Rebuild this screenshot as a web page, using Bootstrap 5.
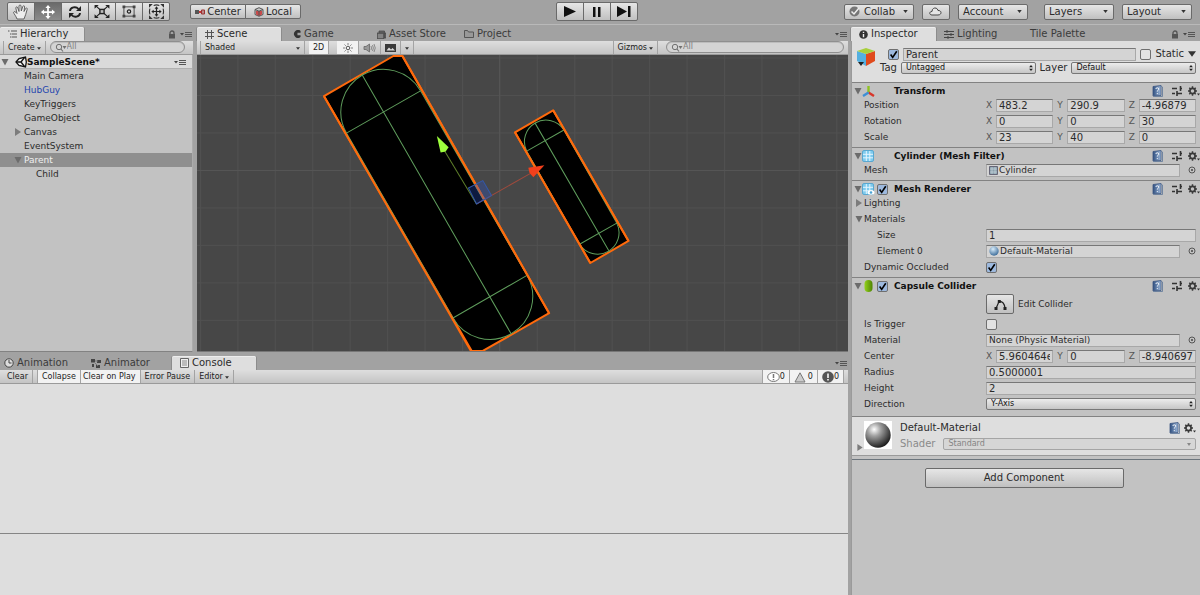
<!DOCTYPE html>
<html lang="en">
<head>
<meta charset="utf-8">
<meta name="viewport" content="width=device-width, initial-scale=1">
<title>SampleScene - Editor</title>
<link href="https://cdn.jsdelivr.net/npm/bootstrap@5.3.0/dist/css/bootstrap.min.css" rel="stylesheet">
<style>
:root { --ui: "DejaVu Sans", sans-serif; --pane: #c2c2c2; --edge: #828282; --ink: #2b2b2b; --fs: 9px; --fs-s: 8px; --fs-l: 10px; }
body { font-family: var(--ui); font-size: var(--fs); line-height: 14px; color: var(--ink); background: #a2a2a2; min-height: 100vh; }
svg { display: block; flex: none; }
button, input, select { font-family: inherit; color: inherit; }
.editor { height: 100vh; min-height: 500px; }

/* top toolbar */
.topbar { height: 25px; padding: 0 8px 1px 7px; border-bottom: 1px solid #b9b9b9; display: grid; grid-template-columns: 1fr auto 1fr; align-items: center; }
.btn-u { --bs-btn-padding-x: 0; --bs-btn-padding-y: 0; --bs-btn-font-size: 10px; --bs-btn-line-height: 12px; --bs-btn-border-color: #6a6a6a; --bs-btn-border-radius: 2px; --bs-btn-color: #2b2b2b; --bs-btn-hover-color: #2b2b2b; --bs-btn-hover-border-color: #555; background: linear-gradient(#e6e6e6, #c0c0c0); display: flex; align-items: center; justify-content: center; gap: 2px; white-space: nowrap; }
.btn-u:hover { background: linear-gradient(#f0f0f0, #cacaca); }
.btn-u.pressed { background: linear-gradient(#6b6b6b, #8b8b8b); }
.tool { width: 28px; height: 19px; }
.pivots { margin-left: 20px; }
.pivot { width: 56px; height: 15px; }
.playback { margin-right: 5px; }
.menu-b { height: 16px; justify-content: space-between; padding: 0 5px 0 4px; }
.w-70 { width: 70px; }
.w-28 { width: 28px; }

/* dock layout */
.dock { display: grid; grid-template-columns: minmax(0, 1fr) 349px; column-gap: 3px; padding-top: 2px; }
.left-col { display: grid; grid-template-rows: minmax(0, 326fr) minmax(0, 239fr); row-gap: 4px; }
.upper { display: grid; grid-template-columns: 193px minmax(0, 1fr); column-gap: 4px; }
.tabs { height: 14px; flex: none; font-size: var(--fs-l); color: #3b3b3b; }
.tab { display: flex; align-items: center; gap: 3px; height: 14px; padding: 0 8px; border: 0; background: none; font-size: inherit; line-height: 14px; color: inherit; white-space: nowrap; }
.tab.active { background: #dedede; border-radius: 2px 2px 0 0; color: var(--ink); box-shadow: inset 0 1px #ededed, -1px 0 #8c8c8c, 1px 0 #8c8c8c; }
.bar { height: 14px; flex: none; background: linear-gradient(#dedede, #c4c4c4); border-bottom: 1px solid #9a9a9a; font-size: var(--fs-s); padding-left: 3px; }
.bar-b { display: flex; align-items: center; gap: 2px; border: 0; border-right: 1px solid #a3a3a3; background: none; padding: 1px 4px 0; font-size: inherit; line-height: 12px; white-space: nowrap; color: #1c1c1c; }
.bar-b.on { background: #f2f2f2; }
.div-l { border-left: 1px solid #a3a3a3; }
.search { display: flex; align-items: center; height: 12px; background: #d4d4d4; border: 1px solid #8f8f8f; border-radius: 6px; padding: 0 4px; box-shadow: inset 0 1px #bdbdbd; }
.search input { border: 0; outline: 0; background: none; padding: 0; height: 10px; min-width: 0; width: 100%; font-size: var(--fs-s); line-height: 10px; }
.search input::placeholder { color: #808080; opacity: 1; }

/* hierarchy */
.tree { background: var(--pane); list-style: none; margin: 0; padding: 0; min-height: 0; flex: 1; border-right: 1px solid #ababab; border-bottom: 1px solid var(--edge); }
.tree li { height: 14px; padding-left: 14px; display: flex; align-items: center; white-space: nowrap; }
.tree li.root { height: 14px; padding: 0 5px 0 1px; background: #dadada; border-bottom: 1px solid #b0b0b0; font-weight: 700; color: #111; }
.tree li.sel { background: #8f8f8f; color: #f0f0f0; }
.tree li.deep { padding-left: 26px; }
.tree a { color: #2345ae; text-decoration: none; }
.fold { width: 10px; flex: none; }
.viewport { background: #474747; flex: 1; min-height: 0; overflow: hidden; border-bottom: 1px solid #777; }
.viewport svg { width: 100%; height: 100%; }

/* console */
.log { background: #dedede; flex: 148; border-bottom: 1px solid #858585; }
.detail { background: #dedede; flex: 61; }

/* inspector */
.insp { background: var(--pane); flex: 1; min-height: 0; border-left: 1px solid #9a9a9a; }
.head { background: #dedede; height: 41px; padding: 6px 4px 0 4px; }
.active-row { padding-left: 8px; }
.comp { border-top: 1px solid #828282; padding: 0 4px 2px 12px; }
.title { height: 14px; padding-top: 2px; margin-left: -10px; display: flex; align-items: center; font-weight: 700; color: #111; }
.title .slot { width: 32px; display: flex; align-items: center; gap: 2px; flex: none; }
.title h2 { font-size: inherit; line-height: 14px; font-weight: 700; margin: 0; flex: 1; }
.acts { display: flex; align-items: center; gap: 6px; margin-right: -4px; }
.acts svg:first-child { margin-right: 3px; }
.rowf { height: 16px; display: flex; align-items: center; }
.rowf > .lab { width: 122px; flex: none; }
.rowf > .lab.in1 { padding-left: 13px; }
.rowf .tri { margin-left: -10px; width: 10px; }
.fld { height: 13px; min-width: 0; width: 100%; flex: 1; padding: 0 2px; font-size: var(--fs-l); line-height: 11px; background: #d4d4d4; border: 1px solid #a8a8a8; border-top-color: #777; border-radius: 0; }
.fld:focus, .pop:focus { outline: 1px solid #3d6fb8; box-shadow: none; }
.obj { display: flex; align-items: center; gap: 1px; text-align: left; font-size: var(--fs); }
.vec { display: grid; grid-template-columns: repeat(3, 1fr); column-gap: 4px; flex: 1; min-width: 0; }
.vec label { display: flex; align-items: center; min-width: 0; color: #555; }
.vec label span { width: 10px; flex: none; }
.vec .fld { color: var(--ink); }
.pop { height: 12px; padding: 0 10px 0 4px; font-size: var(--fs-s); line-height: 10px; border: 1px solid #777; border-radius: 2px; color: #111; background: url("data:image/svg+xml,%3Csvg xmlns='http://www.w3.org/2000/svg' viewBox='0 0 5 8'%3E%3Cpath d='M0 3 2.500 0 5 3zM0 5 2.500 8 5 5z' fill='%23222'/%3E%3C/svg%3E") right 2px center / 4px 6px no-repeat, linear-gradient(#ececec, #c6c6c6); }
.pop.off { color: #848484; border-color: #a5a5a5; background: url("data:image/svg+xml,%3Csvg xmlns='http://www.w3.org/2000/svg' viewBox='0 0 4 3'%3E%3Cpath d='M0 0H4L2 3z' fill='%23888'/%3E%3C/svg%3E") right 4px center / 4px 3px no-repeat, #d6d6d6; opacity: 1; }
.chk.form-check-input { width: 11px; height: 11px; margin: 0; float: none; border: 1px solid #6f6f6f; border-radius: 2px; background-color: #e2e2e2; flex: none; }
.chk.form-check-input:checked { background-color: #9db9de; background-image: url("data:image/svg+xml,%3Csvg xmlns='http://www.w3.org/2000/svg' viewBox='0 0 11 11'%3E%3Cpath d='M2 5.500 4.500 9 9.500 1.500' fill='none' stroke='%23000' stroke-width='2'/%3E%3C/svg%3E"); }
.mat { height: 40px; background: #dedede; border-top: 1px solid #828282; border-bottom: 1px solid #9a9a9a; padding: 4px 4px 0 4px; }
.preview { background: #fff; }
.add { width: 199px; height: 20px; }
.cap { font-size: var(--fs-l); }
</style>
</head>
<body>
<svg width="0" height="0" class="position-absolute" aria-hidden="true">
  <defs>
    <linearGradient id="bookg" x1="0" x2="1"><stop offset="0" stop-color="#2f4f80"/><stop offset="1" stop-color="#9fb9da"/></linearGradient>
    <linearGradient id="capg" x1="0" x2="1"><stop offset="0" stop-color="#93d11c"/><stop offset="1" stop-color="#4f8404"/></linearGradient>
    <radialGradient id="ball" cx=".35" cy=".28" r=".75"><stop offset="0" stop-color="#fff"/><stop offset=".35" stop-color="#a0a0a0"/><stop offset="1" stop-color="#1b1b1b"/></radialGradient>
    <radialGradient id="bball" cx=".4" cy=".3" r=".7"><stop offset="0" stop-color="#d8ecfa"/><stop offset="1" stop-color="#3f6f9c"/></radialGradient>
  </defs>
  <symbol id="down" viewBox="0 0 8 8"><path d="M.5 1h7L4 7.500z" fill="#6c6c6c"/></symbol>
  <symbol id="right" viewBox="0 0 8 8"><path d="M1 0v8l6-4z" fill="#7c7c7c"/></symbol>
  <symbol id="caret" viewBox="0 0 6 4"><path d="M0 0h6L3 4z" fill="#333"/></symbol>
  <symbol id="lock" viewBox="0 0 8 9"><path d="M2 4V3a2 2 0 0 1 4 0v1" fill="none" stroke="#555" stroke-width="1.300"/><path d="M1 4h6v4.500H1z" fill="#555"/></symbol>
  <symbol id="menu" viewBox="0 0 13 8"><path d="M0 3h4L2 5.500z" fill="#444"/><path d="M5 2.500h7M5 4.500h7M5 6.500h7" stroke="#555"/></symbol>
  <symbol id="mag" viewBox="0 0 12 9"><circle cx="4" cy="4" r="2.700" fill="none" stroke="#707070"/><path d="M6 6l2 2.500" stroke="#707070" stroke-width="1.200"/><path d="M7.500 3h4l-2 3z" fill="#707070"/></symbol>
  <symbol id="help" viewBox="0 0 11 12"><path d="M1 1.500 9 .5v10l-8 .5z" fill="url(#bookg)" stroke="#3c5680" stroke-width=".8"/><path d="M9 1l1.500 1v9.500H3L1 11" fill="none" stroke="#5d7698" stroke-width=".8"/><path d="M3.800 4c0-1.600 3-1.600 3 0 0 1.200-1.500 1-1.500 2.600M5.300 8v1.100" fill="none" stroke="#fff" stroke-width=".9"/></symbol>
  <symbol id="preset" viewBox="0 0 10 10"><path d="M0 2.500h5M8 2.500h2M0 7.500h3M5 7.500h5" stroke="#333" stroke-width="1.300"/><path d="M8.500 0v5M5 5v5" stroke="#333" stroke-width="1.600"/></symbol>
  <symbol id="gear" viewBox="0 0 12 10"><circle cx="4.500" cy="5" r="2.600" fill="none" stroke="#3a3a3a" stroke-width="1.700"/><path d="M4.500 .3v2M4.500 7.700v2M0 5h2M7 5h2M1.300 1.800l1.400 1.400M6.300 6.800l1.400 1.400M1.300 8.200l1.400-1.400M6.300 3.200l1.400-1.400" stroke="#3a3a3a" stroke-width="1.500"/><path d="M9 7.500h3L10.500 9.500z" fill="#333"/></symbol>
  <symbol id="pick" viewBox="0 0 8 8"><circle cx="4" cy="4" r="3" fill="none" stroke="#555"/><circle cx="4" cy="4" r="1" fill="#444"/></symbol>
  <symbol id="mesh" viewBox="0 0 12 12"><rect x=".5" y=".5" width="11" height="11" rx="1.500" fill="#7ecbee" stroke="#5aa7cf"/><path d="M4.300 1v10M7.800 1v10M1 4.300h10M1 7.800h10" stroke="#e4f6ff"/></symbol>
</svg>

<div class="editor d-flex flex-column">
  <header class="topbar">
    <div class="d-flex align-items-center">
      <div class="btn-group" role="group" aria-label="Transform tools">
        <button class="btn btn-u tool" aria-label="Hand"><svg width="18" height="16" viewBox="0 0 18 16"><path d="M5 15C4 12 2 10 1.500 8.500 2 7 3.500 7.500 5 9.500L3.800 4c0-1.500 1.600-1.600 2 0L7 7.500 7 2c.2-1.400 1.800-1.400 2 0l.3 5L10.800 2.500c.5-1.300 2-.8 1.800.5L12 7.500l1.600-3c.8-1 2-.3 1.600.8C14 9 13.500 12 12 15z" fill="#ededed" stroke="#555" stroke-width=".9"/></svg></button>
        <button class="btn btn-u tool pressed" aria-label="Move"><svg width="14" height="14" viewBox="0 0 16 16"><path d="M8 1v14M1 8h14" stroke="#fff" stroke-width="2"/><path d="M8 0l3 3.500H5zM8 16l3-3.500H5zM0 8l3.500-3v6zM16 8l-3.500-3v6z" fill="#fff"/></svg></button>
        <button class="btn btn-u tool" aria-label="Rotate"><svg width="14" height="14" viewBox="0 0 14 14"><path d="M2 6c.3-4 6-5 8.500-2M12 8c-.3 4-6 5-8.500 2" fill="none" stroke="#222" stroke-width="1.900"/><path d="M13 1v5H8zM1 13V8h5z" fill="#222"/></svg></button>
        <button class="btn btn-u tool" aria-label="Scale"><svg width="16" height="13" viewBox="0 0 16 14"><path d="M2 1.500l12 11M14 1.500l-12 11" stroke="#222" stroke-width="1.300"/><path d="M5 4h6v6H5z" fill="#222"/><path d="M6.500 5.500h3v3h-3z" fill="#bbb"/><path d="M0 0h4.500L0 4zM16 0h-4.500L16 4zM0 14h4.500L0 10zM16 14h-4.500L16 10z" fill="#222"/></svg></button>
        <button class="btn btn-u tool" aria-label="Rect"><svg width="14" height="13" viewBox="0 0 15 14"><path d="M2 2h11v10H2z" fill="none" stroke="#444"/><circle cx="7.500" cy="7" r="1.800" fill="none" stroke="#222" stroke-width="1.300"/><path d="M.5.5h3v3h-3zM11.500.5h3v3h-3zM.5 10.500h3v3h-3zM11.500 10.500h3v3h-3z" fill="#444"/></svg></button>
        <button class="btn btn-u tool" aria-label="Transform"><svg width="17" height="15" viewBox="0 0 18 16"><path d="M9 4v8M5 8h8" stroke="#222" stroke-width="1.300"/><path d="M9 2.500l2 2.500H7zM9 13.500l2-2.500H7zM3.500 8l2.500-2v4zM14.500 8l-2.500-2v4z" fill="#222"/><path d="M6 1.600Q9 .3 12 1.600M16 5q1 3 0 6M12 14.400q-3 1.200-6 0M2 11q-1-3 0-6" fill="none" stroke="#333" stroke-width="1.200"/><path d="M1 0h4L1 4zM17 0h-4l4 4zM1 16h4l-4-4zM17 16h-4l4-4z" fill="#333"/></svg></button>
      </div>
      <div class="btn-group pivots" role="group" aria-label="Pivot">
        <button class="btn btn-u pivot"><svg width="10" height="8" viewBox="0 0 10 8"><path d="M0 2h4v4H0z" fill="#555"/><path d="M4 4h3" stroke="#c33" stroke-width="2"/><path d="M6.500 2h3v4h-3z" fill="#b88" stroke="#933"/></svg>Center</button>
        <button class="btn btn-u pivot"><svg width="10" height="10" viewBox="0 0 10 10"><path d="M1 2.500 5 .7l4 1.800v5L5 9.300 1 7.500z" fill="#c9c9c9" stroke="#555"/><path d="M2 4h6v3.500L5 9 2 7.500z" fill="#c84a4a"/><path d="M5 4v5M1 2.500l4 1.700 4-1.700" stroke="#555" fill="none"/></svg>Local</button>
      </div>
    </div>
    <div class="btn-group playback" role="group" aria-label="Playback">
      <button class="btn btn-u tool" aria-label="Play"><svg width="14" height="13" viewBox="0 0 14 13"><path d="M1 1l12 5.500L1 12z" fill="#111"/></svg></button>
      <button class="btn btn-u tool" aria-label="Pause"><svg width="10" height="12" viewBox="0 0 10 12"><path d="M1 1h2.500v10H1zM6 1h2.500v10H6z" fill="#111"/></svg></button>
      <button class="btn btn-u tool" aria-label="Step"><svg width="14" height="13" viewBox="0 0 14 13"><path d="M0 1l10 5.500L0 12zM11 1h2.500v11H11z" fill="#111"/></svg></button>
    </div>
    <div class="d-flex justify-content-end gap-2">
      <button class="btn btn-u menu-b w-70"><svg width="11" height="11" viewBox="0 0 11 11"><circle cx="5.500" cy="5.500" r="5" fill="#777"/><path d="M2.500 5.500 5 8l5-6" fill="none" stroke="#eee" stroke-width="1.500"/></svg>Collab<svg class="ms-1" width="5" height="3"><use href="#caret"/></svg></button>
      <button class="btn btn-u menu-b w-28 justify-content-center" aria-label="Cloud"><svg width="13" height="9" viewBox="0 0 13 9"><path d="M3 8C0 8 0 4.500 3 4.500 3 0 8.500 0 9 3.500c4-.3 4 4.500 0 4.500z" fill="#e4e4e4" stroke="#444"/></svg></button>
      <button class="btn btn-u menu-b w-70">Account<svg width="5" height="3"><use href="#caret"/></svg></button>
      <button class="btn btn-u menu-b w-70 ms-2">Layers<svg width="5" height="3"><use href="#caret"/></svg></button>
      <button class="btn btn-u menu-b w-70">Layout<svg width="5" height="3"><use href="#caret"/></svg></button>
    </div>
  </header>

  <main class="dock flex-grow-1">
    <div class="left-col">
      <div class="upper">
        <section class="d-flex flex-column" aria-label="Hierarchy">
          <div class="tabs d-flex align-items-center">
            <button class="tab active px-2" style="width:84px"><svg width="9" height="8" viewBox="0 0 9 8"><path d="M0 1h1.500M3 1h6M2 4h1.500M4 4h5M2 7h1.500M4 7h5" stroke="#555"/></svg>Hierarchy</button>
            <svg class="ms-auto me-1" width="8" height="9"><use href="#lock"/></svg><svg width="13" height="8"><use href="#menu"/></svg>
          </div>
          <div class="bar d-flex">
            <button class="bar-b div-l">Create<svg class="ms-px" width="4" height="3"><use href="#caret"/></svg></button>
            <div class="search flex-grow-1 ms-1 me-2"><svg width="12" height="9"><use href="#mag"/></svg><input type="text" placeholder="All" aria-label="Search hierarchy"></div>
          </div>
          <ul class="tree">
            <li class="root"><span class="fold"><svg width="8" height="8"><use href="#down"/></svg></span><svg class="ms-1" width="12" height="12" viewBox="0 0 12 12"><path d="M1 6 4 2.500 10.500 1 11.300 6 10.500 11 4 9.500z" fill="#eee" stroke="#111" stroke-width="1.300"/><path d="M1 6h5M6 6l3.500-4.500M6 6l3.500 4.500" stroke="#111" stroke-width="1.300"/></svg>SampleScene*<svg class="ms-auto" width="13" height="8"><use href="#menu"/></svg></li>
            <li><span class="fold"></span>Main Camera</li>
            <li><span class="fold"></span><a href="#">HubGuy</a></li>
            <li><span class="fold"></span>KeyTriggers</li>
            <li><span class="fold"></span>GameObject</li>
            <li><span class="fold"><svg width="8" height="8"><use href="#right"/></svg></span>Canvas</li>
            <li><span class="fold"></span>EventSystem</li>
            <li class="sel"><span class="fold"><svg width="8" height="8"><use href="#down"/></svg></span>Parent</li>
            <li class="deep"><span class="fold"></span>Child</li>
          </ul>
        </section>

        <section class="d-flex flex-column" aria-label="Scene">
          <div class="tabs d-flex align-items-center">
            <button class="tab active" style="width:84px"><svg width="9" height="9" viewBox="0 0 9 9"><path d="M2.500 0v9M6.500 0v9M0 2.500h9M0 6.500h9" stroke="#555"/></svg>Scene</button>
            <button class="tab ms-1" style="width:84px"><svg width="8" height="8" viewBox="0 0 9 9"><path d="M8.500 1A4.500 4.500 0 1 0 8.500 8V6H5V3h3.500z" fill="#333"/></svg>Game</button>
            <button class="tab" style="width:87px"><svg width="9" height="9" viewBox="0 0 9 9"><path d="M2 3V1h5.500v2M0 3h7v6H0zM7.500 3H9v5H7.500z" fill="#666" stroke="#444" stroke-width=".7"/><path d="M1 5h5M1 7h5" stroke="#bbb" stroke-width=".7"/></svg>Asset Store</button>
            <button class="tab"><svg width="10" height="8" viewBox="0 0 10 8"><path d="M.5 7.500v-7h3l1 1.500h5v5.500z" fill="#999" stroke="#555"/></svg>Project</button>
            <svg class="ms-auto me-px" width="13" height="8"><use href="#menu"/></svg>
          </div>
          <div class="bar d-flex">
            <button class="bar-b div-l justify-content-between" style="width:105px">Shaded<svg width="4" height="3"><use href="#caret"/></svg></button>
            <button class="bar-b on ms-1">2D</button>
            <button class="bar-b on ms-2 justify-content-center" style="width:22px" aria-label="Lighting"><svg width="10" height="10" viewBox="0 0 10 10"><circle cx="5" cy="5" r="1.800" fill="none" stroke="#555"/><path d="M5 0v2M5 8v2M0 5h2M8 5h2M1.500 1.500l1.300 1.300M7.200 7.200l1.300 1.300M1.500 8.500l1.300-1.300M7.200 2.800l1.300-1.300" stroke="#666" stroke-width=".8"/></svg></button>
            <button class="bar-b" aria-label="Audio"><svg width="13" height="10" viewBox="0 0 13 10"><path d="M1 3.500h2L6.500 1v8L3 6.500H1z" fill="#999" stroke="#666" stroke-width=".8"/><path d="M8 3q1 2 0 4M9.500 2q1.700 3 0 6M11 1q2.500 4 0 8" fill="none" stroke="#777" stroke-width=".8"/></svg></button>
            <button class="bar-b" aria-label="Effects"><svg width="11" height="8" viewBox="0 0 11 8"><path d="M0 0h11v8H0z" fill="#3a3a3a"/><path d="M1.500 6.500l2.500-3 2 2 1.500-1.500 2.500 2.500z" fill="#ddd"/></svg></button>
            <button class="bar-b px-1" aria-label="Effects menu"><svg width="4" height="3"><use href="#caret"/></svg></button>
            <button class="bar-b div-l ms-auto">Gizmos<svg width="4" height="3"><use href="#caret"/></svg></button>
            <div class="search ms-2 me-1" style="width:178px"><svg width="12" height="9"><use href="#mag"/></svg><input type="text" placeholder="All" aria-label="Search scene"></div>
          </div>
          <div class="viewport">
            <svg viewBox="0 0 651 295" preserveAspectRatio="xMidYMid slice" role="img" aria-label="Scene view">
              <defs><pattern id="grid" x="4.500" y="2.500" width="37.250" height="37.300" patternUnits="userSpaceOnUse"><path d="M.5 0v37.300M0 .5h37.250" stroke="#505050"/></pattern></defs>
              <rect width="651" height="295" fill="#474747"/>
              <rect width="651" height="295" fill="url(#grid)"/>
              <path d="M302.500 0v295M0 115h651" stroke="#555"/>
              <g stroke="#ff6a0c" stroke-width="2" stroke-linejoin="round">
                <path d="M128 41 197 1h9l146 256-66 37.500h-11z"/>
                <path d="M318 77l38-22 75 130-38 22z"/>
              </g>
              <g fill="none" stroke="#5f9d5c" stroke-width="1">
                <path d="M150.300 77.700A42.400 42.400 0 0 1 224 35.700L330 219.300A42.400 42.400 0 0 1 256.300 261.700ZM150.300 77.700 224 35.700M256.300 261.700 330 219.300M165.700 19.300 314.300 277.700"/>
                <path d="M329.700 95.700A21.300 21.300 0 0 1 366.700 74.700L419.300 167.300A21.300 21.300 0 0 1 382.300 188.300ZM329.700 95.700l37-21M382.300 188.300l37-21M337.700 67.300 412 195.700"/>
              </g>
              <path d="M128 41 275 296M206 1 352 257M318 77l75 130M356 55l75 130" fill="none" stroke="#ff6a0c" stroke-width="2"/>
              <path d="M279.700 148.300 247.700 95" stroke="#5e7f2a"/>
              <path d="M279.700 148.300 333 118" stroke="#a04a3c"/>
              <path d="M279.700 148.300 271.700 132.300 286 125l8.700 15z" fill="#2850c8" fill-opacity=".32" stroke="#3458a8"/>
              <path d="M240.300 80.700 244 97 249 96 252 91.700z" fill="#9dff3c"/>
              <path d="M347.300 109.700 331.300 112.300 332.500 117.500 336.300 121.700z" fill="#f2401c"/>
            </svg>
          </div>
        </section>
      </div>

      <section class="d-flex flex-column" aria-label="Console">
        <div class="tabs d-flex align-items-center">
          <button class="tab ps-1" style="width:87px"><svg class="ms-px" width="10" height="10" viewBox="0 0 10 10"><circle cx="5" cy="5" r="4.200" fill="#ddd" stroke="#444"/><path d="M5 2v3h2.500" fill="none" stroke="#444"/></svg>Animation</button>
          <button class="tab ps-1" style="width:85px"><svg width="10" height="9" viewBox="0 0 10 9"><path d="M0 0h4v3.500H0zM6 1h4v3H6zM5 6h4v3H5zM1 5h2v3H1z" fill="#444"/><path d="M3 3l4 4M4 2h3" stroke="#777"/></svg>Animator</button>
          <button class="tab active" style="width:84px"><svg width="9" height="10" viewBox="0 0 9 10"><path d="M.5.5h8v9h-8z" fill="#eee" stroke="#666"/><path d="M2 3h5M2 5h5M2 7h5" stroke="#888"/></svg>Console</button>
          <svg class="ms-auto me-px" width="13" height="8"><use href="#menu"/></svg>
        </div>
        <div class="bar d-flex">
          <button class="bar-b ps-1">Clear</button>
          <button class="bar-b div-l on ms-1">Collapse</button>
          <button class="bar-b on" style="padding-left:2px">Clear on Play</button>
          <button class="bar-b">Error Pause</button>
          <button class="bar-b">Editor<svg class="ms-px" width="4" height="3"><use href="#caret"/></svg></button>
          <button class="bar-b div-l on ms-auto px-1 gap-0" aria-label="Messages"><svg width="13" height="11" viewBox="0 0 13 11"><ellipse cx="6.500" cy="5" rx="5.800" ry="4.500" fill="#fff" stroke="#777"/><path d="M6.500 2v4M6.500 7v1.200" stroke="#777" stroke-width="1.500"/></svg>0</button>
          <button class="bar-b on px-1" aria-label="Warnings"><svg width="12" height="11" viewBox="0 0 12 11"><path d="M6 .8 11 10H1z" fill="#ccc" stroke="#777"/></svg>0</button>
          <button class="bar-b on px-1 gap-0" aria-label="Errors"><svg width="12" height="12" viewBox="0 0 12 12"><circle cx="6" cy="6" r="5.800" fill="#555"/><path d="M6 2.500v4.500M6 8v1.500" stroke="#eee" stroke-width="1.700"/></svg>0</button>
          <span class="ms-1"></span>
        </div>
        <div class="log"></div>
        <div class="detail"></div>
      </section>
    </div>

    <aside class="d-flex flex-column" aria-label="Inspector">
      <div class="tabs d-flex align-items-center">
        <button class="tab active" style="width:85px"><svg width="9" height="9" viewBox="0 0 9 9"><circle cx="4.500" cy="4.500" r="4.300" fill="#333"/><path d="M4.500 1.700v1.300M4.500 4v3.300" stroke="#eee" stroke-width="1.400"/></svg>Inspector</button>
        <button class="tab" style="width:86px"><svg width="10" height="9" viewBox="0 0 10 9"><path d="M0 1.500h10M0 4.500h10M0 7.500h10M3 0v3M7 3v3M4 6v3" stroke="#444"/></svg>Lighting</button>
        <button class="tab">Tile Palette</button>
        <svg class="ms-auto me-1" width="8" height="9"><use href="#lock"/></svg><svg class="me-1" width="13" height="8"><use href="#menu"/></svg>
      </div>
      <div class="insp">
        <div class="head d-flex">
          <svg width="20" height="20" viewBox="0 0 20 20"><path d="M1 4l9 3v12l-9-5z" fill="#54b0e0"/><path d="M10 7l9-3v10l-9 5z" fill="#e04a1c"/><path d="M1 4l9-3 9 3-9 3z" fill="#a8cf3c"/><path d="M2 15h6l-3 4z" fill="#222"/></svg>
          <div class="flex-grow-1 ms-1">
            <div class="d-flex align-items-center active-row">
              <input class="form-check-input chk me-1" type="checkbox" checked aria-label="Active">
              <input class="fld" type="text" value="Parent" aria-label="Name">
              <input class="form-check-input chk ms-1 me-1" type="checkbox" id="st">
              <label for="st" class="cap">Static</label>
              <svg class="ms-1" width="8" height="6"><use href="#caret"/></svg>
            </div>
            <div class="d-flex align-items-center">
              <label for="tag" class="cap text-end pe-1" style="width:28px">Tag</label>
              <select id="tag" class="form-select pop"><option>Untagged</option></select>
              <label for="lay" class="cap px-1">Layer</label>
              <select id="lay" class="form-select pop" style="width:92%"><option>Default</option></select>
            </div>
          </div>
        </div>

        <section class="comp">
          <div class="title"><svg width="8" height="8"><use href="#down"/></svg><div class="slot"><svg width="13" height="12" viewBox="0 0 13 12"><path d="M6.500 7.500V1" stroke="#8fc31f" stroke-width="2.400"/><path d="M6.500 7.500 12 11" stroke="#d8362a" stroke-width="2.400"/><path d="M6.500 7.500 1 11" stroke="#3d8fd6" stroke-width="2.400"/></svg></div><h2>Transform</h2>
            <div class="acts"><svg width="11" height="12"><use href="#help"/></svg><svg width="10" height="10"><use href="#preset"/></svg><svg width="12" height="10"><use href="#gear"/></svg></div></div>
          <div class="rowf"><span class="lab">Position</span><div class="vec"><label><span>X</span><input class="fld" value="483.2"></label><label><span>Y</span><input class="fld" value="290.9"></label><label><span>Z</span><input class="fld" value="-4.96879"></label></div></div>
          <div class="rowf"><span class="lab">Rotation</span><div class="vec"><label><span>X</span><input class="fld" value="0"></label><label><span>Y</span><input class="fld" value="0"></label><label><span>Z</span><input class="fld" value="30"></label></div></div>
          <div class="rowf"><span class="lab">Scale</span><div class="vec"><label><span>X</span><input class="fld" value="23"></label><label><span>Y</span><input class="fld" value="40"></label><label><span>Z</span><input class="fld" value="0"></label></div></div>
        </section>

        <section class="comp">
          <div class="title"><svg width="8" height="8"><use href="#down"/></svg><div class="slot"><svg width="12" height="12"><use href="#mesh"/></svg></div><h2>Cylinder (Mesh Filter)</h2>
            <div class="acts"><svg width="11" height="12"><use href="#help"/></svg><svg width="10" height="10"><use href="#preset"/></svg><svg width="12" height="10"><use href="#gear"/></svg></div></div>
          <div class="rowf"><span class="lab">Mesh</span><button class="fld obj"><svg width="9" height="9" viewBox="0 0 9 9"><path d="M.5.5h8v8h-8z" fill="#8aa0ac" stroke="#667"/><path d="M3 1v7M6 1v7M1 3h7M1 6h7" stroke="#cfdce4" stroke-width=".6"/></svg>Cylinder</button><svg class="ms-2" width="8" height="8"><use href="#pick"/></svg></div>
        </section>

        <section class="comp">
          <div class="title"><svg width="8" height="8"><use href="#down"/></svg><div class="slot"><svg width="13" height="12" viewBox="0 0 13 12"><use href="#mesh" width="12" height="12"/><ellipse cx="9" cy="9.500" rx="3.500" ry="2.200" fill="#fff"/><circle cx="9" cy="9.500" r="1.300" fill="#4aa3d4"/></svg><input class="form-check-input chk ms-px" type="checkbox" checked aria-label="Mesh Renderer enabled"></div><h2>Mesh Renderer</h2>
            <div class="acts"><svg width="11" height="12"><use href="#help"/></svg><svg width="10" height="10"><use href="#preset"/></svg><svg width="12" height="10"><use href="#gear"/></svg></div></div>
          <div class="rowf"><svg class="tri" width="10" height="8"><use href="#right"/></svg><span class="lab">Lighting</span></div>
          <div class="rowf"><svg class="tri" width="10" height="8"><use href="#down"/></svg><span class="lab">Materials</span></div>
          <div class="rowf"><label class="lab in1" for="sz">Size</label><input id="sz" class="fld" value="1"></div>
          <div class="rowf"><span class="lab in1">Element 0</span><button class="fld obj"><svg width="10" height="10" viewBox="0 0 10 10"><circle cx="5" cy="5" r="4.700" fill="url(#bball)"/></svg>Default-Material</button><svg class="ms-2" width="8" height="8"><use href="#pick"/></svg></div>
          <div class="rowf"><label class="lab" for="dyn">Dynamic Occluded</label><input id="dyn" class="form-check-input chk" type="checkbox" checked></div>
        </section>

        <section class="comp pb-1">
          <div class="title"><svg width="8" height="8"><use href="#down"/></svg><div class="slot"><svg width="13" height="12" viewBox="0 0 13 12"><rect x="2.500" width="8" height="12" rx="4" fill="url(#capg)"/></svg><input class="form-check-input chk ms-px" type="checkbox" checked aria-label="Capsule Collider enabled"></div><h2>Capsule Collider</h2>
            <div class="acts"><svg width="11" height="12"><use href="#help"/></svg><svg width="10" height="10"><use href="#preset"/></svg><svg width="12" height="10"><use href="#gear"/></svg></div></div>
          <div class="d-flex align-items-center" style="height:24px"><span style="width:122px"></span><button id="ec" class="btn btn-u" style="width:28px;height:20px" aria-label="Edit Collider"><svg width="13" height="11" viewBox="0 0 13 11"><path d="M2 9.500 5 2.500Q10 2 11 9" fill="none" stroke="#222" stroke-width="1.200"/><path d="M.5 8h3v3h-3zM3.800 1h3v3h-3zM9.500 8h3v3h-3z" fill="#222"/></svg></button><label for="ec" class="ms-1 ps-px">Edit Collider</label></div>
          <div class="rowf"><label class="lab" for="trg">Is Trigger</label><input id="trg" class="form-check-input chk" type="checkbox"></div>
          <div class="rowf"><span class="lab">Material</span><button class="fld obj">None (Physic Material)</button><svg class="ms-2" width="8" height="8"><use href="#pick"/></svg></div>
          <div class="rowf"><span class="lab">Center</span><div class="vec"><label><span>X</span><input class="fld" value="5.960464e"></label><label><span>Y</span><input class="fld" value="0"></label><label><span>Z</span><input class="fld" value="-8.940697"></label></div></div>
          <div class="rowf"><label class="lab" for="rad">Radius</label><input id="rad" class="fld" value="0.5000001"></div>
          <div class="rowf"><label class="lab" for="hei">Height</label><input id="hei" class="fld" value="2"></div>
          <div class="rowf"><label class="lab" for="dir">Direction</label><select id="dir" class="form-select pop"><option>Y-Axis</option></select></div>
        </section>

        <section class="mat d-flex">
          <svg class="align-self-end mb-1" width="8" height="7"><use href="#right"/></svg>
          <svg class="preview" width="28" height="28" viewBox="0 0 28 28"><circle cx="14" cy="14" r="12.700" fill="url(#ball)"/></svg>
          <div class="flex-grow-1 ps-2" style="min-width:0">
            <div class="d-flex align-items-center cap"><span class="flex-grow-1">Default-Material</span><svg width="11" height="12"><use href="#help"/></svg><svg class="ms-1" width="12" height="10"><use href="#gear"/></svg></div>
            <div class="d-flex align-items-center" style="padding-top:2px"><label for="shd" class="cap pe-2" style="color:#8a8a8a">Shader</label><select id="shd" class="form-select pop off" disabled><option>Standard</option></select></div>
          </div>
        </section>
        <div class="border-top border-secondary pt-2 pe-1 d-flex justify-content-center" style="margin-top:3px"><button class="btn btn-u add">Add Component</button></div>
      </div>
    </aside>
  </main>
</div>
<script src="https://cdn.jsdelivr.net/npm/bootstrap@5.3.0/dist/js/bootstrap.bundle.min.js"></script>
</body>
</html>
